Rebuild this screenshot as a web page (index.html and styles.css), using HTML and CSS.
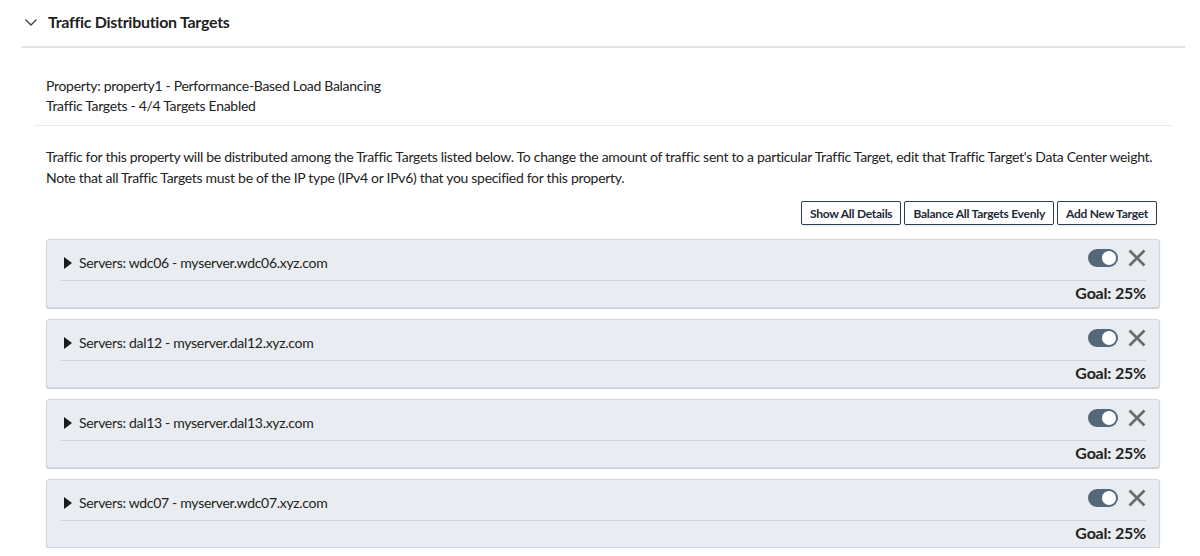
FILE: index.html
```html
<!DOCTYPE html>
<html>
<head>
<meta charset="utf-8">
<link rel="stylesheet" href="styles.css">
</head>
<body>
<section class="panel">
  <header class="panel-header">
    <svg class="chevron" width="14" height="14" viewBox="0 0 14 14"><path d="M1.5 4.5 L7 10 L12.5 4.5" fill="none" stroke="#444" stroke-width="1.4"/></svg>
    <h2 class="panel-title">Traffic Distribution Targets</h2>
  </header>
  <div class="panel-body">
    <div class="info">
      <div>Property: property1 - Performance-Based Load Balancing</div>
      <div>Traffic Targets - 4/4 Targets Enabled</div>
    </div>
    <div class="content">
      <p class="desc">Traffic for this property will be distributed among the Traffic Targets listed below. To change the amount of traffic sent to a particular Traffic Target, edit that Traffic Target's Data Center weight. Note that all Traffic Targets must be of the IP type (IPv4 or IPv6) that you specified for this property.</p>
      <div class="actions">
        <button class="btn">Show All Details</button>
        <button class="btn">Balance All Targets Evenly</button>
        <button class="btn">Add New Target</button>
      </div>
      <div class="cards">
        <div class="card">
          <div class="card-top">
            <div class="card-name"><span class="caret"></span>Servers: wdc06 - myserver.wdc06.xyz.com</div>
            <div class="card-tools"><span class="toggle"><span class="knob"></span></span><svg class="close" width="18" height="18" viewBox="0 0 18 18"><path d="M1.5 1.5 L16.5 16.5 M16.5 1.5 L1.5 16.5" stroke="#6b6b6b" stroke-width="2.8" fill="none"/></svg></div>
          </div>
          <div class="card-bottom">Goal: 25%</div>
        </div>
        <div class="card">
          <div class="card-top">
            <div class="card-name"><span class="caret"></span>Servers: dal12 - myserver.dal12.xyz.com</div>
            <div class="card-tools"><span class="toggle"><span class="knob"></span></span><svg class="close" width="18" height="18" viewBox="0 0 18 18"><path d="M1.5 1.5 L16.5 16.5 M16.5 1.5 L1.5 16.5" stroke="#6b6b6b" stroke-width="2.8" fill="none"/></svg></div>
          </div>
          <div class="card-bottom">Goal: 25%</div>
        </div>
        <div class="card">
          <div class="card-top">
            <div class="card-name"><span class="caret"></span>Servers: dal13 - myserver.dal13.xyz.com</div>
            <div class="card-tools"><span class="toggle"><span class="knob"></span></span><svg class="close" width="18" height="18" viewBox="0 0 18 18"><path d="M1.5 1.5 L16.5 16.5 M16.5 1.5 L1.5 16.5" stroke="#6b6b6b" stroke-width="2.8" fill="none"/></svg></div>
          </div>
          <div class="card-bottom">Goal: 25%</div>
        </div>
        <div class="card">
          <div class="card-top">
            <div class="card-name"><span class="caret"></span>Servers: wdc07 - myserver.wdc07.xyz.com</div>
            <div class="card-tools"><span class="toggle"><span class="knob"></span></span><svg class="close" width="18" height="18" viewBox="0 0 18 18"><path d="M1.5 1.5 L16.5 16.5 M16.5 1.5 L1.5 16.5" stroke="#6b6b6b" stroke-width="2.8" fill="none"/></svg></div>
          </div>
          <div class="card-bottom">Goal: 25%</div>
        </div>
      </div>
    </div>
  </div>
</section>
</body>
</html>
```
FILE: styles.css
```css
* { box-sizing: border-box; }
html, body { margin: 0; padding: 0; background: #fff; }
body {
  font-family: "Lato", "Liberation Sans", sans-serif;
  font-size: 14px;
  letter-spacing: -0.3px;
  color: #222;
  line-height: 20px;
}
.panel { margin: 0 15px 0 22px; }
.panel-header {
  height: 48px;
  border-bottom: 2px solid #e1e1e1;
  display: flex;
  align-items: center;
  padding: 0 0 2px 2px;
}
.chevron { margin-right: 10px; flex: none; }
.panel-title {
  margin: 0;
  font-size: 16px;
  font-weight: 700;
  letter-spacing: -0.28px;
  color: #1f1f1f;
}
.panel-body { padding: 0 13px 0 12px; }
.info {
  padding: 28px 12px 9px;
  border-bottom: 1px solid #e9e9e9;
}
.content { padding: 0 12px; }
.desc {
  margin: 20px 0 0;
  line-height: 21px;
}
.actions {
  display: flex;
  justify-content: flex-end;
  gap: 3px;
  margin-top: 13px;
  padding-right: 3px;
}
.btn {
  height: 24px;
  padding: 0 8px;
  border: 1px solid #2c3d4f;
  border-radius: 2px;
  background: #fff;
  font-family: "Lato", "Liberation Sans", sans-serif;
  font-size: 12px;
  font-weight: 700;
  letter-spacing: -0.25px;
  color: #1d2a38;
  box-shadow: 0 1px 1px rgba(0,0,0,0.08);
}
.cards {
  margin-top: 14px;
  display: flex;
  flex-direction: column;
  gap: 11px;
}
.card {
  height: 69px;
  background: #e9edf1;
  border: 1px solid #d3d8dd;
  border-radius: 3px;
  box-shadow: 0 1px 1px rgba(0,0,0,0.22);
  padding: 0 13px 0 14px;
}
.card-top {
  height: 41px;
  border-bottom: 1px solid #cdd2d7;
  display: flex;
  justify-content: space-between;
  align-items: flex-start;
}
.card-name {
  display: flex;
  align-items: center;
  padding-top: 14px;
  line-height: 18px;
}
.caret {
  width: 0; height: 0;
  border-top: 6px solid transparent;
  border-bottom: 6px solid transparent;
  border-left: 8px solid #1b1b1b;
  margin: 0 7px 0 3px;
}
.card-tools {
  display: flex;
  align-items: center;
  gap: 10px;
  padding-top: 9px;
}
.toggle {
  width: 30px;
  height: 18px;
  border-radius: 9px;
  background: #55687a;
  display: flex;
  align-items: center;
  justify-content: flex-end;
  padding-right: 2px;
}
.knob {
  width: 14px; height: 14px;
  border-radius: 50%;
  background: #fff;
}
.close { display: block; }
.card-bottom {
  text-align: right;
  font-weight: 700;
  font-size: 16px;
  letter-spacing: -0.2px;
  padding-top: 2px;
  line-height: 20px;
}
```
